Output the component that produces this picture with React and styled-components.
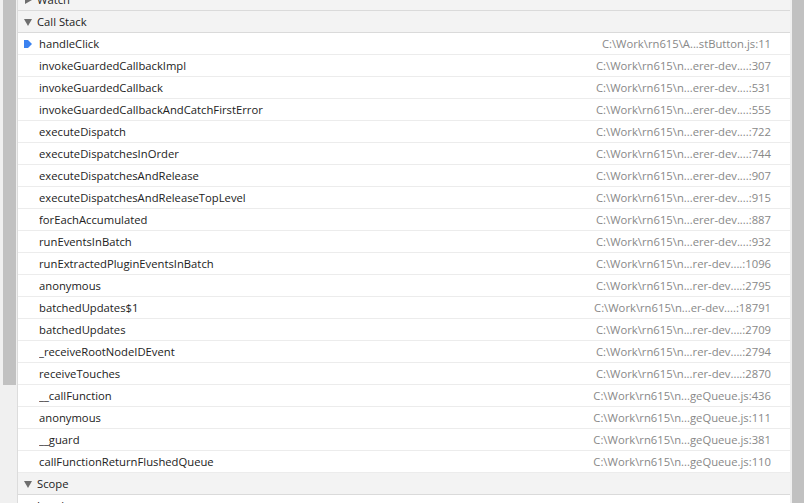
import React from "react";
import styled, { createGlobalStyle } from "styled-components";

const Global = createGlobalStyle`
  html, body { margin: 0; padding: 0; height: 100%; overflow: hidden; background: #fff; }
  body { font-family: "Open Sans", "Noto Sans", sans-serif; font-size: 11.25px; }
`;

const Frame = styled.div`
  display: flex;
  width: 804px;
  height: 503px;
  overflow: hidden;
`;

const LeftTrack = styled.div`
  width: 14px;
  flex: none;
  background: #f0f0f0;
  border-right: 1px solid #dcdcdc;
  padding-left: 3px;
`;

const LeftThumb = styled.div`
  width: 13px;
  height: 385px;
  background: #c1c1c1;
`;

const Panel = styled.div`
  flex: 1;
  display: flex;
  flex-direction: column;
  margin-top: -11px;
  min-width: 0;
`;

const RightTrack = styled.div`
  width: 14px;
  flex: none;
  background: #f0f0f0;
  display: flex;
  justify-content: flex-end;
`;

const RightThumb = styled.div`
  width: 12px;
  height: 100%;
  background: #c1c1c1;
`;

const Header = styled.div`
  height: 21px;
  display: flex;
  align-items: center;
  background: ${p => (p.$plain ? "#fff" : "#f3f3f3")};
  border-bottom: 1px solid #dadada;
  color: #222;
  padding-left: 6px;
  gap: 5px;
  flex: none;
`;

const Tri = styled.span`
  width: 0;
  height: 0;
  border-left: ${p => (p.$open ? "4px solid transparent" : "7px solid #6e6e6e")};
  border-right: ${p => (p.$open ? "4px solid transparent" : "0")};
  border-top: ${p => (p.$open ? "7px solid #6e6e6e" : "4px solid transparent")};
  border-bottom: ${p => (p.$open ? "0" : "4px solid transparent")};
  margin-left: ${p => (p.$open ? "0" : "1px")};
  margin-top: 1px;
`;

const Row = styled.div`
  height: 21px;
  display: flex;
  align-items: center;
  border-bottom: 1px solid #ececec;
  position: relative;
  flex: none;
  padding-left: 21px;
  padding-right: 19px;
`;

const Marker = styled.svg`
  position: absolute;
  left: 6px;
  top: 6px;
`;

const Name = styled.span`
  color: #222;
  flex: 1;
  white-space: nowrap;
  overflow: hidden;
`;

const Loc = styled.span`
  color: #888;
  white-space: nowrap;
`;

const frames = [
  ["handleClick", "C:\\Work\\rn615\\A...stButton.js:11", true],
  ["invokeGuardedCallbackImpl", "C:\\Work\\rn615\\n...erer-dev....:307"],
  ["invokeGuardedCallback", "C:\\Work\\rn615\\n...erer-dev....:531"],
  ["invokeGuardedCallbackAndCatchFirstError", "C:\\Work\\rn615\\n...erer-dev....:555"],
  ["executeDispatch", "C:\\Work\\rn615\\n...erer-dev....:722"],
  ["executeDispatchesInOrder", "C:\\Work\\rn615\\n...erer-dev....:744"],
  ["executeDispatchesAndRelease", "C:\\Work\\rn615\\n...erer-dev....:907"],
  ["executeDispatchesAndReleaseTopLevel", "C:\\Work\\rn615\\n...erer-dev....:915"],
  ["forEachAccumulated", "C:\\Work\\rn615\\n...erer-dev....:887"],
  ["runEventsInBatch", "C:\\Work\\rn615\\n...erer-dev....:932"],
  ["runExtractedPluginEventsInBatch", "C:\\Work\\rn615\\n...rer-dev....:1096"],
  ["anonymous", "C:\\Work\\rn615\\n...rer-dev....:2795"],
  ["batchedUpdates$1", "C:\\Work\\rn615\\n...er-dev....:18791"],
  ["batchedUpdates", "C:\\Work\\rn615\\n...rer-dev....:2709"],
  ["_receiveRootNodeIDEvent", "C:\\Work\\rn615\\n...rer-dev....:2794"],
  ["receiveTouches", "C:\\Work\\rn615\\n...rer-dev....:2870"],
  ["__callFunction", "C:\\Work\\rn615\\n...geQueue.js:436"],
  ["anonymous", "C:\\Work\\rn615\\n...geQueue.js:111"],
  ["__guard", "C:\\Work\\rn615\\n...geQueue.js:381"],
  ["callFunctionReturnFlushedQueue", "C:\\Work\\rn615\\n...geQueue.js:110"],
];

export default function App() {
  return (
    <>
      <Global />
      <Frame>
        <LeftTrack>
          <LeftThumb />
        </LeftTrack>
        <Panel>
          <Header>
            <Tri />
            Watch
          </Header>
          <Header>
            <Tri $open />
            Call Stack
          </Header>
          {frames.map(([n, l, cur], i) => (
            <Row key={i}>
              {cur && (
                <Marker width="8" height="10" viewBox="0 0 8 10">
                  <path d="M0 1 H4 L8 5 L4 9 H0 Z" fill="#3b82f0" />
                </Marker>
              )}
              <Name>{n}</Name>
              <Loc>{l}</Loc>
            </Row>
          ))}
          <Header>
            <Tri $open />
            Scope
          </Header>
          <Header $plain>
            <Tri $open />
            Local
          </Header>
        </Panel>
        <RightTrack>
          <RightThumb />
        </RightTrack>
      </Frame>
    </>
  );
}
